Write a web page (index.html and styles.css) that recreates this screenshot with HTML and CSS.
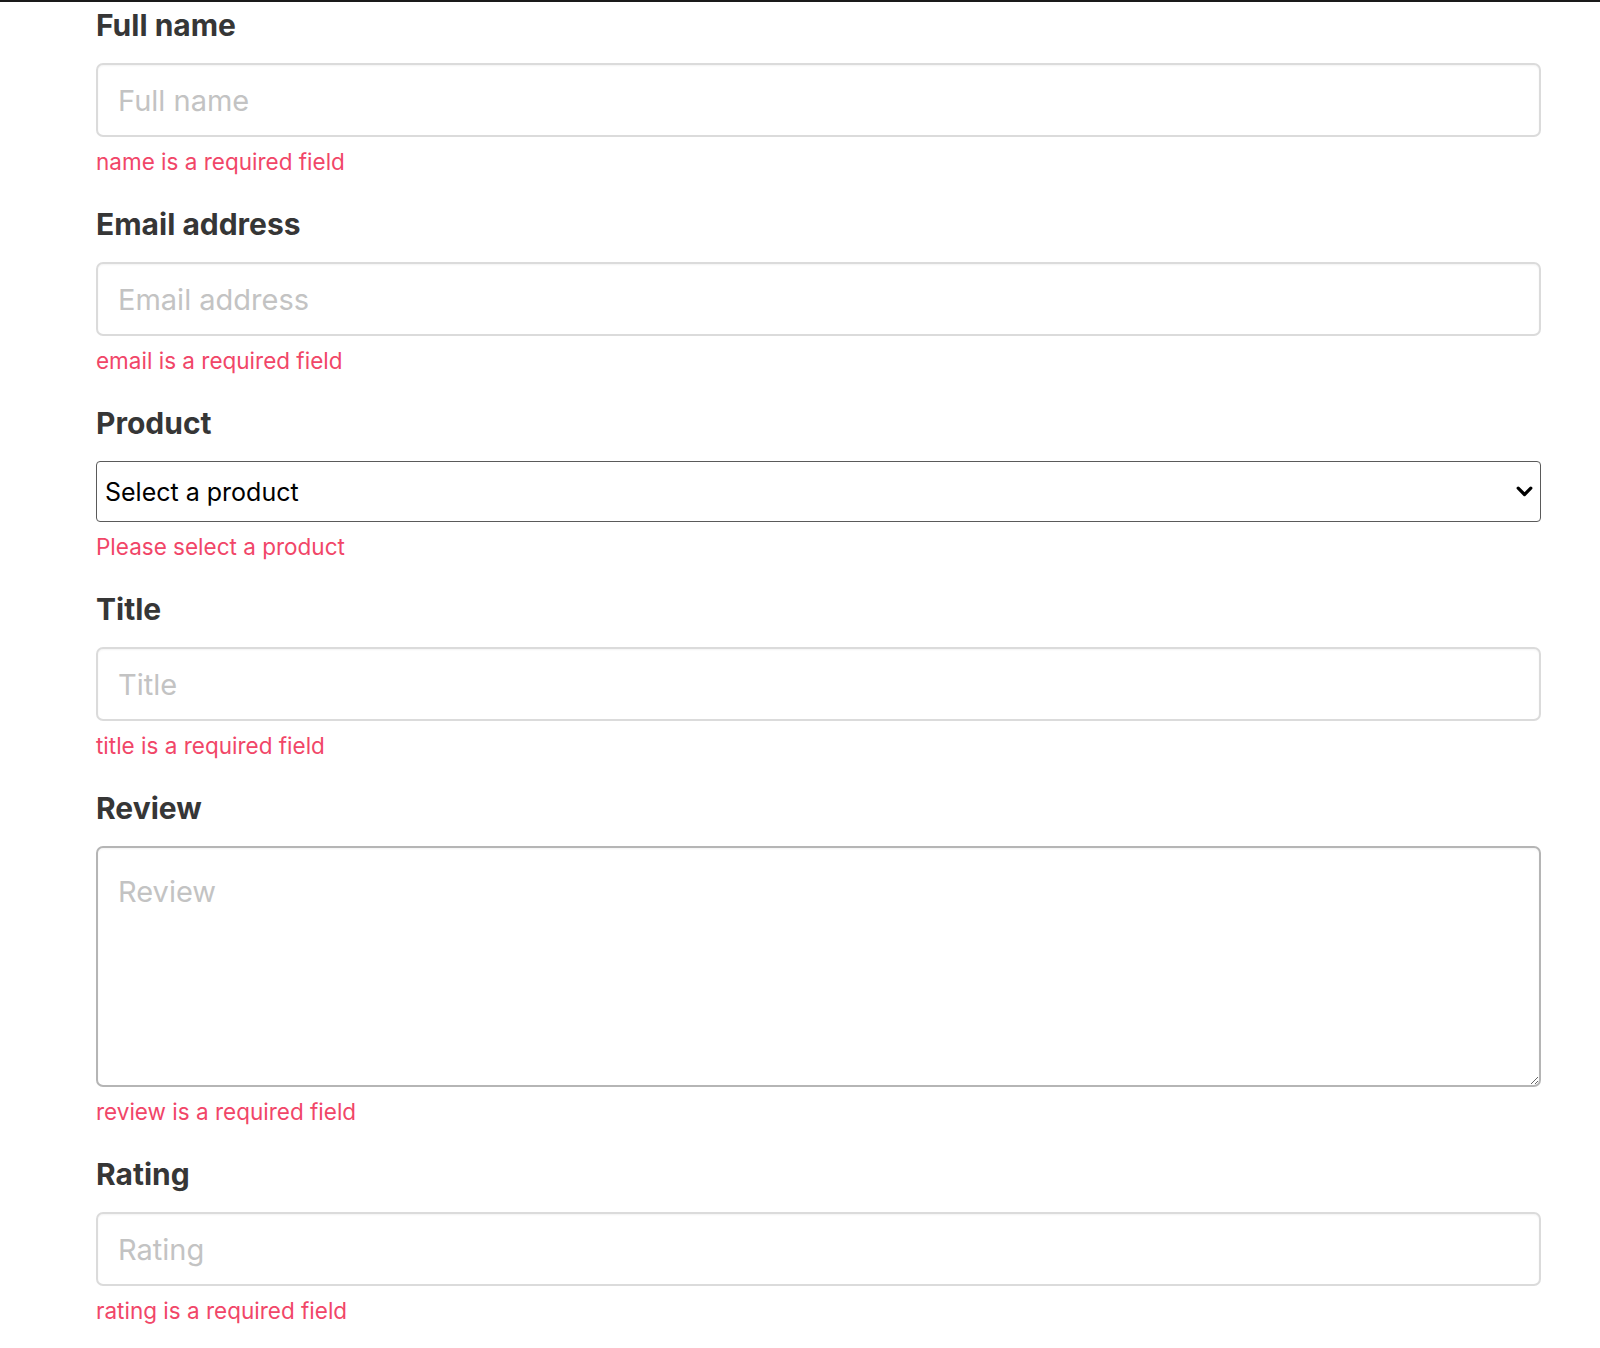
FILE: index.html
```html
<!DOCTYPE html>
<html lang="en">
<head>
<meta charset="utf-8">
<title>Review form</title>
<link rel="stylesheet" href="styles.css">
</head>
<body>
<form class="form">
  <div class="field">
    <label class="label" for="name">Full name</label>
    <input class="input" id="name" type="text" placeholder="Full name">
    <p class="help">name is a required field</p>
  </div>
  <div class="field">
    <label class="label" for="email">Email address</label>
    <input class="input" id="email" type="email" placeholder="Email address">
    <p class="help">email is a required field</p>
  </div>
  <div class="field">
    <label class="label" for="product">Product</label>
    <div class="select-wrap">
      <select class="select" id="product">
        <option>Select a product</option>
      </select>
      <svg class="chevron" width="17" height="11" viewBox="0 0 17 11"><path d="M2.2 2.2 L8.5 8.5 L14.8 2.2" fill="none" stroke="#000" stroke-width="3.2" stroke-linecap="round" stroke-linejoin="round"/></svg>
    </div>
    <p class="help">Please select a product</p>
  </div>
  <div class="field">
    <label class="label" for="title">Title</label>
    <input class="input" id="title" type="text" placeholder="Title">
    <p class="help">title is a required field</p>
  </div>
  <div class="field">
    <label class="label" for="review">Review</label>
    <textarea class="textarea" id="review" placeholder="Review"></textarea>
    <p class="help">review is a required field</p>
  </div>
  <div class="field">
    <label class="label" for="rating">Rating</label>
    <input class="input" id="rating" type="text" placeholder="Rating">
    <p class="help">rating is a required field</p>
  </div>
</form>
</body>
</html>
```

FILE: styles.css
```css
html, body {
  margin: 0;
  padding: 0;
  background: #fff;
}
body {
  border-top: 2px solid #1a1a1a;
  font-family: "Inter", "Liberation Sans", sans-serif;
  color: #363636;
}
.form {
  width: 1445px;
  padding: 6px 0 0 96px;
  margin: 0;
}
.field {
  margin-bottom: 30px;
}
.label {
  display: block;
  font-size: 30px;
  font-weight: 700;
  line-height: 34px;
  color: #363636;
  margin-bottom: 21px;
}
.input,
.textarea {
  display: block;
  box-sizing: border-box;
  width: 100%;
  margin: 0;
  border: 2px solid #dbdbdb;
  border-radius: 7px;
  background: #fff;
  box-shadow: inset 0 1px 2px rgba(10, 10, 10, 0.05);
  font-family: "Inter", "Liberation Sans", sans-serif;
  font-size: 29px;
  color: #363636;
  outline: none;
}
.input {
  height: 74px;
  padding: 0 20px;
}
.textarea {
  height: 241px;
  padding: 26px 20px 0;
  line-height: 36px;
  border-color: #b5b5b5;
  resize: vertical;
}
.input::placeholder,
.textarea::placeholder {
  color: #c3c3c3;
  opacity: 1;
}
.select-wrap {
  position: relative;
}
.select {
  display: block;
  box-sizing: border-box;
  width: 100%;
  height: 61px;
  margin: 0;
  padding: 0 40px 0 8px;
  border: 1px solid #5a5a5a;
  border-radius: 4px;
  background: #fff;
  -webkit-appearance: none;
  appearance: none;
  font-family: "Inter", "Liberation Sans", sans-serif;
  font-size: 25px;
  color: #000;
  outline: none;
}
.chevron {
  position: absolute;
  right: 8px;
  top: 25px;
  pointer-events: none;
}
.help {
  margin: 10px 0 0;
  font-size: 22.5px;
  line-height: 30px;
  color: #f14668;
}
```
